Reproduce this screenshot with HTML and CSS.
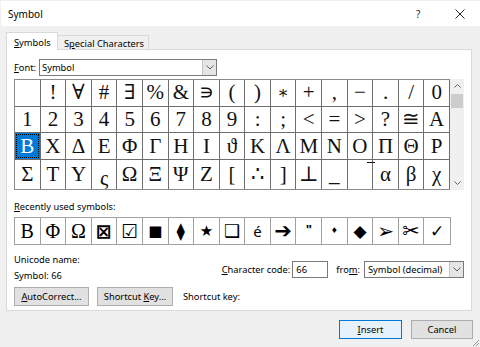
FILE: index.html
```html
<!DOCTYPE html>
<html>
<head>
<meta charset="utf-8">
<link rel="stylesheet" href="styles.css">
</head>
<body>
<div class="win">
  <div class="titlebar">
    <span class="title">Symbol</span>
    <span class="help">?</span>
    <span class="close"><svg width="10" height="10" viewBox="0 0 10 10"><path d="M0.5 0.5 L9.5 9.5 M9.5 0.5 L0.5 9.5" stroke="#222" stroke-width="1" fill="none"/></svg></span>
  </div>
  <div class="tabs">
    <div class="tab active"><span><u>S</u>ymbols</span></div>
    <div class="tab"><span>S<u>p</u>ecial Characters</span></div>
  </div>
  <div class="panel">
    <div class="font-row">
      <span class="lbl"><u>F</u>ont:</span>
      <div class="select font-select"><span class="val">Symbol</span><span class="arrow"><svg width="8" height="5" viewBox="0 0 8 5"><path d="M0.5 0.5 L4 4 L7.5 0.5" stroke="#606060" fill="none"/></svg></span></div>
    </div>
    <div class="grid-wrap">
      <div class="grid">
        <div class="c"></div><div class="c">!</div><div class="c">∀</div><div class="c">#</div><div class="c">∃</div><div class="c">%</div><div class="c">&amp;</div><div class="c">∍</div><div class="c">(</div><div class="c">)</div><div class="c ast">∗</div><div class="c">+</div><div class="c">,</div><div class="c">−</div><div class="c">.</div><div class="c">/</div><div class="c">0</div>
        <div class="c">1</div><div class="c">2</div><div class="c">3</div><div class="c">4</div><div class="c">5</div><div class="c">6</div><div class="c">7</div><div class="c">8</div><div class="c">9</div><div class="c">:</div><div class="c">;</div><div class="c">&lt;</div><div class="c">=</div><div class="c">&gt;</div><div class="c">?</div><div class="c">≅</div><div class="c">Α</div>
        <div class="c sel"><span class="focus">Β</span></div><div class="c">Χ</div><div class="c">Δ</div><div class="c">Ε</div><div class="c">Φ</div><div class="c">Γ</div><div class="c">Η</div><div class="c">Ι</div><div class="c">ϑ</div><div class="c">Κ</div><div class="c">Λ</div><div class="c">Μ</div><div class="c">Ν</div><div class="c">Ο</div><div class="c">Π</div><div class="c">Θ</div><div class="c">Ρ</div>
        <div class="c">Σ</div><div class="c">Τ</div><div class="c">Υ</div><div class="c low">ς</div><div class="c">Ω</div><div class="c">Ξ</div><div class="c">Ψ</div><div class="c">Ζ</div><div class="c">[</div><div class="c">∴</div><div class="c">]</div><div class="c">⊥</div><div class="c">_</div><div class="c over"><span class="bar"></span></div><div class="c">α</div><div class="c">β</div><div class="c">χ</div>
      </div>
      <div class="scrollbar">
        <div class="sb-btn"><svg width="7" height="4" viewBox="0 0 7 4"><path d="M0.5 3.5 L3.5 0.5 L6.5 3.5" stroke="#606060" fill="none"/></svg></div>
        <div class="thumb"></div>
        <div class="sb-space"></div>
        <div class="sb-btn"><svg width="7" height="4" viewBox="0 0 7 4"><path d="M0.5 0.5 L3.5 3.5 L6.5 0.5" stroke="#606060" fill="none"/></svg></div>
      </div>
    </div>
    <div class="recent-label"><u>R</u>ecently used symbols:</div>
    <div class="recent">
      <div class="r serif">Β</div><div class="r serif">Φ</div><div class="r serif">Ω</div><div class="r ding bx">⊠</div><div class="r ding bx2">☑</div><div class="r ding sq">■</div><div class="r ding tall">⧫</div><div class="r ding star">★</div><div class="r ding box3">❑</div><div class="r sans">é</div><div class="r ding arr">➔</div><div class="r sans q">"</div><div class="r ding tiny">♦</div><div class="r ding big">◆</div><div class="r ding arr2">➢</div><div class="r ding sc">✂</div><div class="r ding ck">✓</div>
    </div>
    <div class="info">
      <div class="info-left">
        <div class="line">Unicode name:</div>
        <div class="line">Symbol: 66</div>
      </div>
      <div class="code">
        <span class="lbl"><u>C</u>haracter code:</span>
        <div class="input">66</div>
        <span class="lbl from">fro<u>m</u>:</span>
        <div class="select from-select"><span class="val">Symbol (decimal)</span><span class="arrow"><svg width="8" height="5" viewBox="0 0 8 5"><path d="M0.5 0.5 L4 4 L7.5 0.5" stroke="#606060" fill="none"/></svg></span></div>
      </div>
    </div>
    <div class="btn-row">
      <div class="btn auto"><span><u>A</u>utoCorrect...</span></div>
      <div class="btn short"><span>Shortcut <u>K</u>ey...</span></div>
      <span class="sk">Shortcut key:</span>
    </div>
  </div>
  <div class="footer">
    <div class="btn insert"><span><u>I</u>nsert</span></div>
    <div class="btn cancel"><span>Cancel</span></div>
  </div>
  <div class="grip"><svg width="8" height="8" viewBox="0 0 8 8"><path d="M7 1 L1 7 M7 4 L4 7" stroke="#9a9a9a" stroke-width="1" fill="none"/></svg></div>
</div>
</body>
</html>
```
FILE: styles.css
```css
* { box-sizing: border-box; }
html, body { margin: 0; padding: 0; }
body {
  width: 480px;
  height: 347px;
  overflow: hidden;
  background: #f0f0f0;
  font-family: "Noto Sans", "Open Sans", sans-serif;
  font-size: 9.3px;
  color: #000;
}
u { text-decoration: underline; text-underline-offset: 1px; }
.win {
  width: 480px;
  height: 347px;
  background: #f0f0f0;
  position: relative;
  padding-top: 1px;
  padding-left: 1px;
}
.titlebar {
  height: 25px;
  background: #fff;
  display: flex;
  align-items: center;
  padding-left: 7px;
}
.title { font-size: 10px; flex: 1; padding-top: 1px; }
.help { font-size: 10px; width: 12px; margin-right: 27px; color: #222; }
.close { width: 10px; height: 10px; margin-right: 15px; display: flex; margin-top: 1px; }

.tabs {
  display: flex;
  align-items: flex-end;
  height: 23px;
  padding-left: 5px;
}
.tab {
  height: 14px;
  padding: 0 6px;
  border: 1px solid #d9d9d9;
  border-bottom: none;
  background: #f0f0f0;
  display: flex;
  align-items: center;
  padding-top: 1px;
  white-space: nowrap;
}
.tab.active {
  height: 18px;
  width: 52px;
  padding-left: 7px;
  background: #fff;
  margin-bottom: -1px;
  position: relative;
  z-index: 1;
}
.tab.active + .tab { border-left: none; width: 91px; }

.panel {
  margin-left: 5px;
  width: 466px;
  height: 262px;
  background: #fff;
  border: 1px solid #d9d9d9;
  padding: 0 7px;
}
.font-row {
  margin-top: 9px;
  display: flex;
  align-items: center;
  height: 17px;
}
.lbl { white-space: nowrap; }
.select {
  height: 17px;
  border: 1px solid #7a7a7a;
  background: #fff;
  display: flex;
  align-items: center;
}
.select .val { flex: 1; padding-left: 2px; white-space: nowrap; }
.select .arrow {
  width: 14px;
  height: 15px;
  background: #e5e5e5;
  border-left: 1px solid #c5c5c5;
  display: flex;
  align-items: center;
  justify-content: center;
}
.font-select { width: 178px; margin-left: 3px; }

.grid-wrap { display: flex; margin-top: 3px; height: 111px; }
.grid {
  width: 436px;
  height: 111px;
  display: grid;
  grid-template-columns: repeat(17, 1fr);
  grid-template-rows: repeat(4, 1fr);
  border-top: 1px solid #8a8a8a;
  border-left: 1px solid #8a8a8a;
  border-bottom: 1px solid #8a8a8a;
}
.c {
  border-right: 1px solid #6e6e6e;
  border-bottom: 1px solid #6e6e6e;
  font-family: "Liberation Serif", "DejaVu Serif", serif;
  font-size: 21px;
  display: flex;
  align-items: center;
  justify-content: center;
  line-height: 1;
  color: #111;
}
.grid .c:nth-last-child(-n+17) { border-bottom: none; }
.c.ast { font-size: 17px; }
.c.low { padding-top: 8px; }
.c.over { position: relative; }
.c.over .bar {
  position: absolute;
  top: 2px;
  right: -3px;
  width: 8px;
  height: 1px;
  background: #111;
}
.c.sel { background: #0078d7; color: #fff; padding: 1px; }
.c.sel .focus {
  width: 100%;
  height: 100%;
  border: 1px dotted #000;
  display: flex;
  align-items: center;
  justify-content: center;
}
.scrollbar {
  width: 14px;
  height: 111px;
  background: #f0f0f0;
  display: flex;
  flex-direction: column;
  align-items: center;
}
.sb-btn { height: 14px; width: 14px; display: flex; align-items: center; justify-content: center; }
.thumb { width: 12px; height: 14px; background: #cdcdcd; margin-top: 1px; }
.sb-space { flex: 1; }

.recent-label { margin-top: 10px; height: 13px; line-height: 13px; }
.recent {
  margin-top: 4px;
  width: 437px;
  height: 28px;
  display: grid;
  grid-template-columns: repeat(17, 1fr);
  border: 1px solid #a0a0a0;
}
.r {
  border-right: 1px solid #a0a0a0;
  display: flex;
  align-items: center;
  justify-content: center;
  line-height: 1;
}
.r:last-child { border-right: none; }
.r.serif { font-family: "Liberation Serif", serif; font-size: 20px; }
.r.sans { font-family: "Noto Sans", sans-serif; font-size: 15px; }
.r.q { font-size: 13px; font-weight: bold; padding-bottom: 3px; }
.r.ding { font-family: "DejaVu Sans", sans-serif; font-size: 15px; }
.r.bx { font-size: 19px; font-weight: bold; }
.r.bx2 { font-size: 19px; font-weight: bold; }
.r.sq { font-size: 15px; }
.r.tall { font-size: 17px; }
.r.star { font-size: 15px; }
.r.box3 { font-size: 18px; font-weight: bold; }
.r.arr { font-size: 21px; font-weight: bold; }
.r.tiny { font-size: 8px; }
.r.big { font-size: 17px; }
.r.arr2 { font-size: 20px; }
.r.sc { font-size: 21px; }
.r.ck { font-size: 17px; font-weight: bold; }

.info { display: flex; margin-top: 7px; height: 32px; }
.info-left { width: 214px; }
.line { height: 16px; line-height: 16px; }
.code { display: flex; align-items: center; margin-top: 9px; height: 17px; }
.input {
  width: 36px;
  height: 17px;
  border: 1px solid #7a7a7a;
  margin-left: 2px;
  padding-left: 3px;
  display: flex;
  align-items: center;
}
.from { margin-left: 8px; }
.from-select { width: 100px; margin-left: 4px; }
.from-select .val { padding-left: 3px; }

.btn-row { display: flex; align-items: center; margin-top: 3px; height: 19px; }
.btn {
  height: 19px;
  background: #e1e1e1;
  border: 1px solid #adadad;
  display: flex;
  align-items: center;
  justify-content: center;
  white-space: nowrap;
}
.auto { width: 75px; }
.short { width: 76px; margin-left: 8px; }
.sk { margin-left: 10px; }

.footer {
  display: flex;
  justify-content: flex-end;
  margin-top: 9px;
  padding-right: 7px;
}
.insert { width: 63px; background: #e5f1fb; border-color: #0078d7; }
.cancel { width: 62px; margin-left: 9px; }
.grip { position: absolute; right: 0; bottom: 0; width: 8px; height: 8px; display: flex; }
```
